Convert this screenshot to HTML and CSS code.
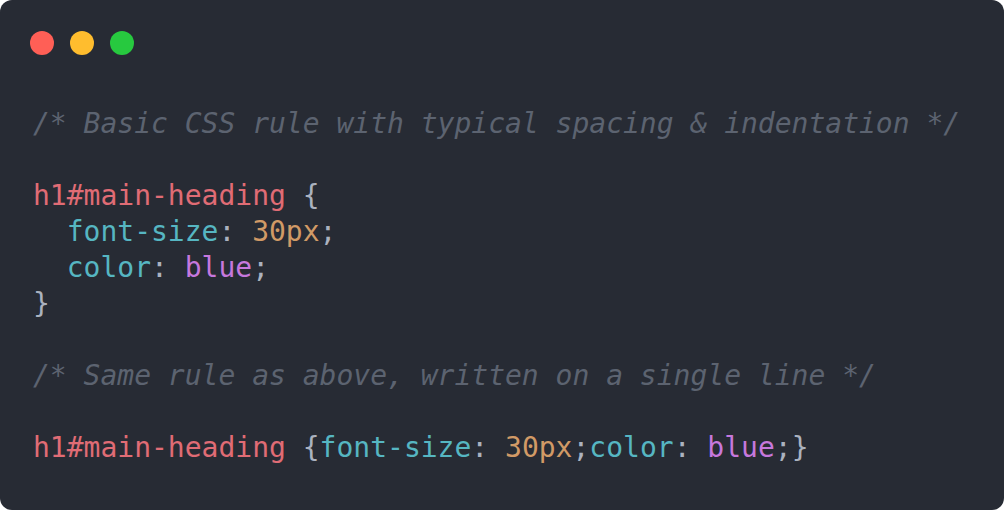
FILE: index.html
```html
<!DOCTYPE html>
<html>
<head>
<meta charset="utf-8">
<link rel="stylesheet" href="styles.css">
</head>
<body>
<div class="window">
  <div class="lights">
    <span class="dot red"></span>
    <span class="dot yellow"></span>
    <span class="dot green"></span>
  </div>
<pre class="code"><span class="cm">/* Basic CSS rule with typical spacing &amp; indentation */</span>

<span class="sel">h1#main-heading</span> <span class="pn">{</span>
  <span class="pr">font-size</span><span class="pn">:</span> <span class="nu">30px</span><span class="pn">;</span>
  <span class="pr">color</span><span class="pn">:</span> <span class="kw">blue</span><span class="pn">;</span>
<span class="pn">}</span>

<span class="cm">/* Same rule as above, written on a single line */</span>

<span class="sel">h1#main-heading</span> <span class="pn">{</span><span class="pr">font-size</span><span class="pn">:</span> <span class="nu">30px</span><span class="pn">;</span><span class="pr">color</span><span class="pn">:</span> <span class="kw">blue</span><span class="pn">;}</span></pre>
</div>
</body>
</html>
```
FILE: styles.css
```css
html, body {
  margin: 0;
  padding: 0;
  background: #ffffff;
}
.window {
  width: 1004px;
  height: 510px;
  box-sizing: border-box;
  background: #272b34;
  border-radius: 12px;
  padding: 31px 33px 0 33px;
}
.lights {
  display: flex;
  gap: 16px;
  margin-left: -3px;
}
.dot {
  width: 24px;
  height: 24px;
  border-radius: 50%;
  display: block;
}
.red { background: #ff5f56; }
.yellow { background: #ffbd2e; }
.green { background: #27c93f; }
.code {
  margin: 51px 0 0 0;
  font-family: "DejaVu Sans Mono", monospace;
  font-size: 28px;
  line-height: 36px;
  color: #abb2bf;
}
.cm { color: #5c6370; font-style: italic; }
.sel { color: #e06c75; }
.pn { color: #abb2bf; }
.pr { color: #56b6c2; }
.nu { color: #d19a66; }
.kw { color: #c678dd; }
```
